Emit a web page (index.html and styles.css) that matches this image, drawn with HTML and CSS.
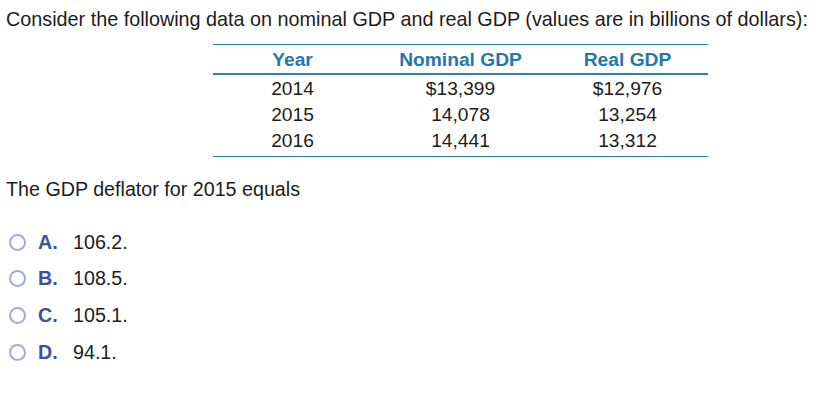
FILE: index.html
```html
<!DOCTYPE html>
<html>
<head>
<meta charset="utf-8">
<link rel="stylesheet" href="styles.css">
</head>
<body>
<div class="page">
  <p class="intro">Consider the following data on nominal GDP and real GDP (values are in billions of dollars):</p>
  <table class="data">
    <thead>
      <tr><th>Year</th><th>Nominal GDP</th><th>Real GDP</th></tr>
    </thead>
    <tbody>
      <tr class="first"><td>2014</td><td>$13,399</td><td>$12,976</td></tr>
      <tr><td>2015</td><td>14,078</td><td>13,254</td></tr>
      <tr class="last"><td>2016</td><td>14,441</td><td>13,312</td></tr>
    </tbody>
  </table>
  <p class="question">The GDP deflator for 2015 equals</p>
  <ul class="options">
    <li><span class="radio"></span><span class="letter">A.</span><span class="val">106.2.</span></li>
    <li><span class="radio"></span><span class="letter">B.</span><span class="val">108.5.</span></li>
    <li><span class="radio"></span><span class="letter">C.</span><span class="val">105.1.</span></li>
    <li><span class="radio"></span><span class="letter">D.</span><span class="val">94.1.</span></li>
  </ul>
</div>
</body>
</html>
```
FILE: styles.css
```css
html, body {
  margin: 0;
  padding: 0;
  background: #ffffff;
}
body {
  font-family: "Liberation Sans", Arial, sans-serif;
  color: #1c1c1c;
}
.page {
  padding: 8px 0 0 6px;
}
.intro {
  margin: 0;
  font-size: 19.8px;
  line-height: 22px;
}
.data {
  margin: 14px 0 0 207px;
  border-collapse: collapse;
  width: 495px;
  font-size: 19.2px;
  border-top: 1px solid #2f7ea8;
  border-bottom: 1px solid #2f7ea8;
}
.data th, .data td {
  width: 33.33%;
  text-align: center;
  padding: 0;
}
.data th:first-child, .data td:first-child {
  padding-right: 6px;
}
.data th:last-child, .data td:last-child {
  padding-left: 4px;
}
.data th {
  color: #1f78b0;
  font-weight: bold;
  height: 27px;
  line-height: 26px;
  padding-top: 1px;
  border-bottom: 2px solid #2f7ea8;
}
.data td {
  height: 26px;
  line-height: 26px;
}
.data tr.first td {
  padding-top: 1px;
}
.data tr.last td {
  padding-bottom: 2px;
}
.question {
  margin: 21px 0 0 0;
  font-size: 19.7px;
  line-height: 22px;
}
.options {
  list-style: none;
  margin: 24px 0 0 3px;
  padding: 0;
}
.options li {
  display: flex;
  align-items: center;
  height: 36.6px;
  font-size: 19.7px;
}
.radio {
  display: block;
  width: 17px;
  height: 17px;
  border: 2px solid #a3aad6;
  border-radius: 50%;
  box-sizing: border-box;
  flex: none;
}
.letter {
  color: #3c4fa0;
  font-weight: bold;
  margin-left: 12px;
  width: 35px;
}
.val {
  color: #1c1c1c;
}
```
